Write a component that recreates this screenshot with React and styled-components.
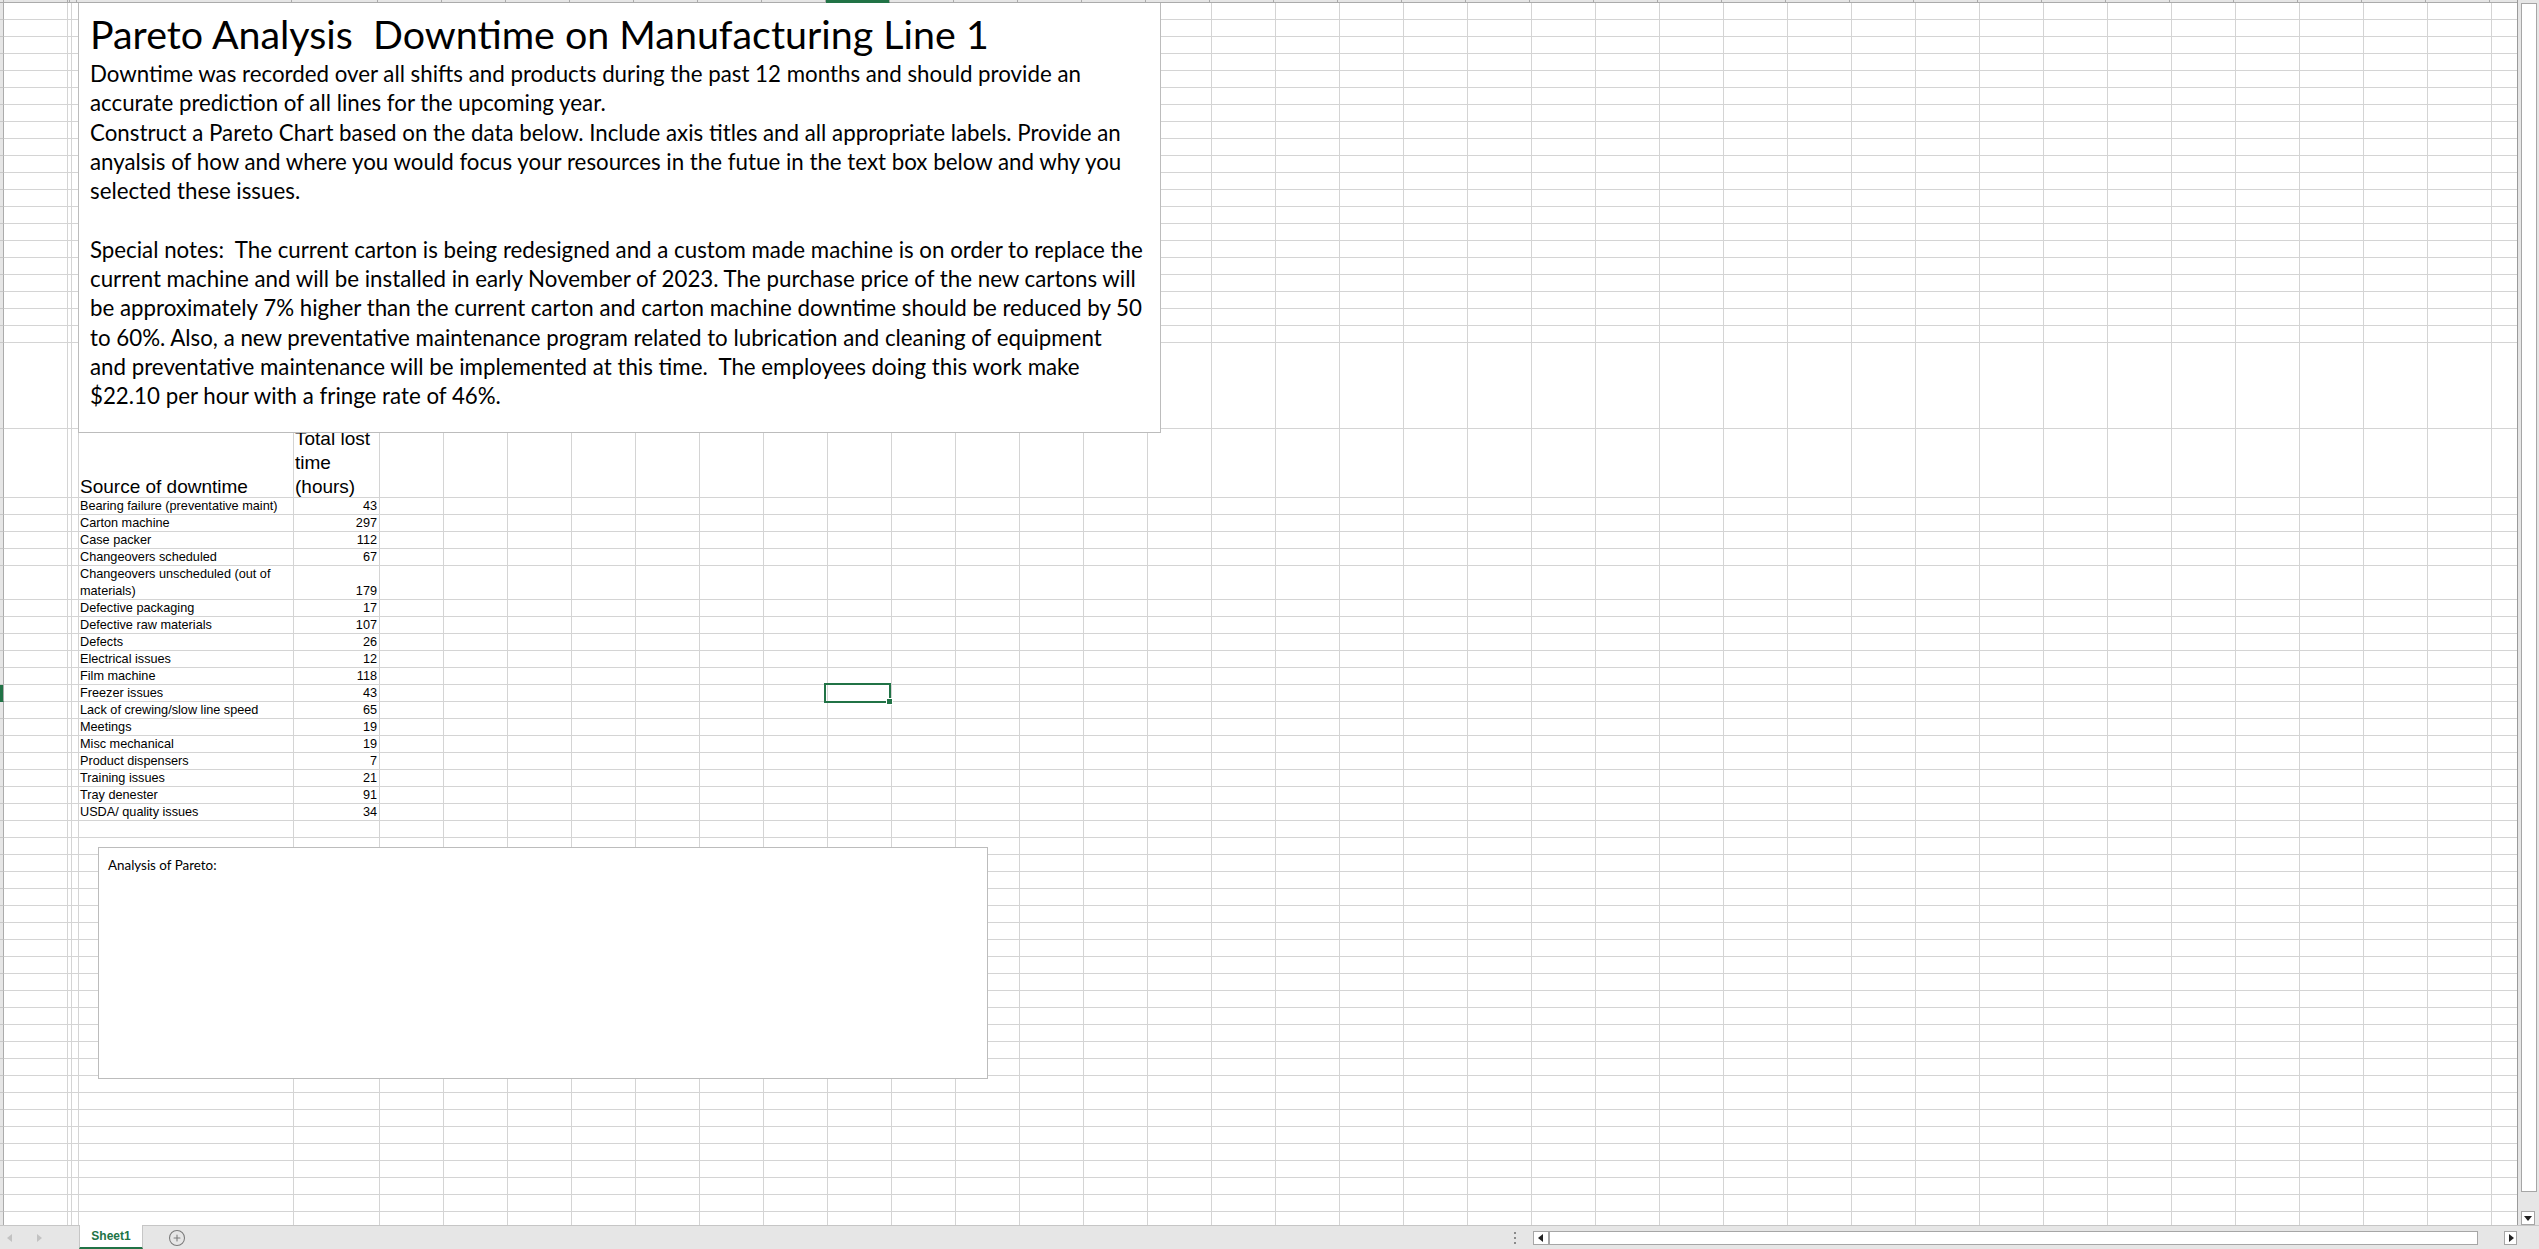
import React from "react";
import styled, { createGlobalStyle } from "styled-components";
import { CirclePlus } from "lucide-react";

const GlobalStyle = createGlobalStyle`
  html, body {
    margin: 0;
    padding: 0;
    overflow: hidden;
    background: #ffffff;
  }
  body {
    font-family: "Liberation Sans", Arial, sans-serif;
    color: #000;
  }
`;

// column widths incl. the 1px gridline on the right
const COLS = [64, 2, 7, 215, 86, ...Array(34).fill(64)];
const SEL_COL = 12;

const downtime = [
  ["Bearing failure (preventative maint)", 43],
  ["Carton machine", 297],
  ["Case packer", 112],
  ["Changeovers scheduled", 67],
  ["Changeovers unscheduled (out of materials)", 179, 34],
  ["Defective packaging", 17],
  ["Defective raw materials", 107],
  ["Defects", 26],
  ["Electrical issues", 12],
  ["Film machine", 118],
  ["Freezer issues", 43],
  ["Lack of crewing/slow line speed", 65],
  ["Meetings", 19],
  ["Misc mechanical", 19],
  ["Product dispensers", 7],
  ["Training issues", 21],
  ["Tray denester", 91],
  ["USDA/ quality issues", 34],
];

const rows = [
  ...Array(20).fill({ h: 17 }),
  { h: 86 },
  { h: 69, header: true },
  ...downtime.map(([label, hours, h]) => ({
    h: h || 17,
    label,
    hours,
    wrap: !!h,
    selected: label === "Freezer issues",
  })),
  ...Array(25).fill({ h: 17 }),
];

const intro = [
  "Downtime was recorded over all shifts and products during the past 12 months and should provide an",
  "accurate prediction of all lines for the upcoming year.",
  "Construct a Pareto Chart based on the data below. Include axis titles and all appropriate labels. Provide an",
  "anyalsis of how and where you would focus your resources in the futue in the text box below and why you",
  "selected these issues.",
  "",
  "Special notes:  The current carton is being redesigned and a custom made machine is on order to replace the",
  "current machine and will be installed in early November of 2023. The purchase price of the new cartons will",
  "be approximately 7% higher than the current carton and carton machine downtime should be reduced by 50",
  "to 60%. Also, a new preventative maintenance program related to lubrication and cleaning of equipment",
  "and preventative maintenance will be implemented at this time.  The employees doing this work make",
  "$22.10 per hour with a fringe rate of 46%.",
];

const Window = styled.div`
  width: 2539px;
  height: 1249px;
  display: flex;
  flex-direction: column;
  background: #e6e6e6;
  overflow: hidden;
`;

const Main = styled.div`
  display: flex;
  height: 1225px;
`;

const Sheet = styled.div`
  position: relative;
  width: 2518px;
  height: 1225px;
  box-sizing: border-box;
  border-right: 1px solid #9b9b9b;
  background: #ffffff;
  overflow: hidden;
`;

const Row = styled.div`
  display: flex;
  height: ${(p) => p.$h}px;
`;

const HeadStrip = styled(Row)`
  position: relative;
  z-index: 3;
`;

const ColHead = styled.div`
  flex: none;
  width: ${(p) => p.$w}px;
  box-sizing: border-box;
  background: ${(p) => (p.$active ? "#217346" : "#e6e6e6")};
  border-right: 1px solid #ababab;
  border-bottom: 1px solid ${(p) => (p.$active ? "#217346" : "#ababab")};
`;

const RowHead = styled.div`
  flex: none;
  width: 4px;
  box-sizing: border-box;
  background: ${(p) => (p.$active ? "#217346" : "#e6e6e6")};
  border-right: 1px solid #ababab;
  border-bottom: 1px solid ${(p) => (p.$active ? "#217346" : "#c8c8c8")};
`;

const Cell = styled.div`
  flex: none;
  width: ${(p) => p.$w}px;
  box-sizing: border-box;
  border-right: 1px solid #d4d4d4;
  border-bottom: 1px solid #d4d4d4;
  overflow: hidden;
  display: flex;
  align-items: flex-end;
  justify-content: ${(p) => (p.$right ? "flex-end" : "flex-start")};
  padding: 0 2px 0 1px;
  font-size: 12.7px;
  line-height: ${(p) => (p.$wrap ? "16.5px" : "16px")};
  white-space: ${(p) => (p.$wrap ? "normal" : "nowrap")};
`;

const HeadText = styled.div`
  font-size: 19px;
  line-height: 24px;
  margin-bottom: -2px;
  white-space: normal;
`;

const TextBox = styled.div`
  position: absolute;
  left: ${(p) => p.$x}px;
  top: ${(p) => p.$y}px;
  width: ${(p) => p.$w}px;
  height: ${(p) => p.$h}px;
  box-sizing: border-box;
  background: #ffffff;
  border: 1px solid #bcbcbc;
  font-family: Lato, "Open Sans", sans-serif;
  z-index: 2;
`;

const IntroBox = styled(TextBox)`
  padding: 8px 0 0 11px;
`;

const Title = styled.div`
  font-size: 39.4px;
  line-height: 50px;
  white-space: pre;
`;

const Para = styled.div`
  font-size: 22.3px;
  line-height: 29.3px;
  height: 29.3px;
  white-space: pre;
`;

const AnswerBox = styled(TextBox)`
  padding: 9px 0 0 9px;
  font-size: 13.4px;
  line-height: 16px;
`;

const Selection = styled.div`
  position: absolute;
  left: 824px;
  top: 683px;
  width: 67px;
  height: 20px;
  box-sizing: border-box;
  border: 2px solid #217346;
  z-index: 1;
`;

const FillHandle = styled.div`
  position: absolute;
  right: -4px;
  bottom: -4px;
  width: 5px;
  height: 5px;
  background: #217346;
  border: 1px solid #ffffff;
`;

const VScroll = styled.div`
  flex: 1;
  display: flex;
  flex-direction: column;
  padding: 3px 2px 0 3px;
  background: #e6e6e6;
`;

const VThumb = styled.div`
  height: 1189px;
  box-sizing: border-box;
  border: 1px solid #a6a6a6;
  background: #ffffff;
`;

const ArrowBtn = styled.div`
  width: ${(p) => p.$w || 14}px;
  height: 14px;
  box-sizing: border-box;
  border: 1px solid #a6a6a6;
  background: #ffffff;
  display: flex;
  align-items: center;
  justify-content: center;
  margin-top: ${(p) => p.$mt || 0}px;
  flex: none;
`;

const BottomBar = styled.div`
  height: 24px;
  display: flex;
  align-items: stretch;
  background: #e6e6e6;
  border-top: 1px solid #c6c6c6;
  box-sizing: border-box;
`;

const TabNav = styled.div`
  width: 79px;
  display: flex;
  align-items: center;
  gap: 21px;
  padding-left: 6px;
  box-sizing: border-box;
`;

const SheetTab = styled.div`
  width: 64px;
  margin-top: -1px;
  box-sizing: border-box;
  background: #ffffff;
  border-left: 1px solid #c6c6c6;
  border-right: 1px solid #c6c6c6;
  border-bottom: 2px solid #217346;
  display: flex;
  align-items: center;
  justify-content: center;
  color: #217346;
  font-weight: 700;
  font-size: 12px;
`;

const AddSheet = styled.div`
  width: 56px;
  display: flex;
  align-items: center;
  justify-content: center;
  margin-left: 6px;
  color: #7a7a7a;
`;

const HScroll = styled.div`
  margin-left: auto;
  display: flex;
  align-items: center;
  padding-right: 22px;
`;

const Splitter = styled.div`
  width: 20px;
  height: 12px;
  display: flex;
  flex-direction: column;
  align-items: center;
  justify-content: space-between;
  margin-right: 8px;
  span {
    width: 2px;
    height: 2px;
    background: #8a8a8a;
  }
`;

const HThumb = styled.div`
  width: 929px;
  height: 14px;
  box-sizing: border-box;
  border: 1px solid #a6a6a6;
  background: #ffffff;
`;

const HTrack = styled.div`
  width: 26px;
`;

const Tri = ({ dir, color = "#222", size = 8 }) => {
  const pts = {
    left: "6,0 6,8 1,4",
    right: "2,0 2,8 7,4",
    down: "0,2 8,2 4,7",
  }[dir];
  return (
    <svg width={size} height={size} viewBox="0 0 8 8">
      <polygon points={pts} fill={color} />
    </svg>
  );
};

const SheetRow = ({ row }) => (
  <Row $h={row.h}>
    <RowHead $active={row.selected} />
    {COLS.map((w, i) => {
      if (row.header && i === 3)
        return (
          <Cell key={i} $w={w}>
            <HeadText>Source of downtime</HeadText>
          </Cell>
        );
      if (row.header && i === 4)
        return (
          <Cell key={i} $w={w}>
            <HeadText>Total lost time (hours)</HeadText>
          </Cell>
        );
      if (row.label && i === 3)
        return (
          <Cell key={i} $w={w} $wrap={row.wrap}>
            {row.label}
          </Cell>
        );
      if (row.label && i === 4)
        return (
          <Cell key={i} $w={w} $right>
            {row.hours}
          </Cell>
        );
      return <Cell key={i} $w={w} />;
    })}
  </Row>
);

const App = () => {
  return (
    <>
      <GlobalStyle />
      <Window>
        <Main>
          <Sheet>
            <HeadStrip $h={3}>
              <ColHead $w={4} />
              {COLS.map((w, i) => (
                <ColHead key={i} $w={w} $active={i === SEL_COL} />
              ))}
            </HeadStrip>
            {rows.map((row, i) => (
              <SheetRow key={i} row={row} />
            ))}

            <IntroBox $x={78} $y={0} $w={1083} $h={433}>
              <Title>Pareto Analysis  Downtime on Manufacturing Line 1</Title>
              {intro.map((line, i) => (
                <Para key={i}>{line}</Para>
              ))}
            </IntroBox>

            <AnswerBox $x={98} $y={847} $w={890} $h={232}>
              Analysis of Pareto:
            </AnswerBox>

            <Selection>
              <FillHandle />
            </Selection>
          </Sheet>
          <VScroll>
            <VThumb />
            <ArrowBtn $mt={19}>
              <Tri dir="down" />
            </ArrowBtn>
          </VScroll>
        </Main>
        <BottomBar>
          <TabNav>
            <Tri dir="left" color="#c2c2c2" />
            <Tri dir="right" color="#c2c2c2" />
          </TabNav>
          <SheetTab>Sheet1</SheetTab>
          <AddSheet>
            <CirclePlus size={18} strokeWidth={1.4} />
          </AddSheet>
          <HScroll>
            <Splitter>
              <span />
              <span />
              <span />
            </Splitter>
            <ArrowBtn $w={16}>
              <Tri dir="left" />
            </ArrowBtn>
            <HThumb />
            <HTrack />
            <ArrowBtn $w={13}>
              <Tri dir="right" />
            </ArrowBtn>
          </HScroll>
        </BottomBar>
      </Window>
    </>
  );
};

export default App;
